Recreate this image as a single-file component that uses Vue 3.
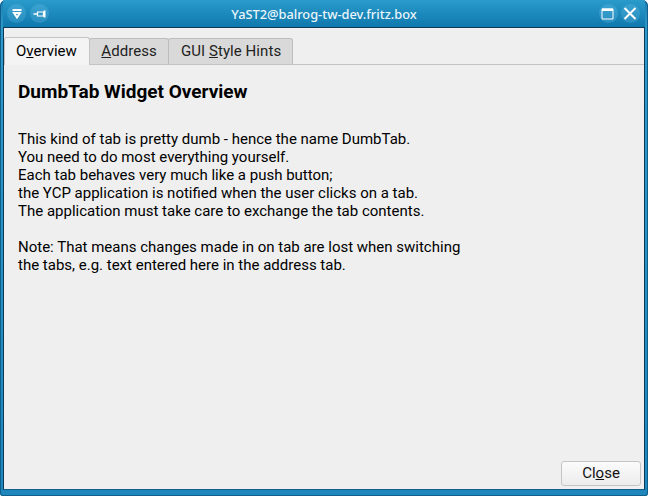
<template>
  <div class="window">
    <div class="titlebar">
      <div class="title-btns">
        <span class="round-btn">
          <svg width="14" height="14" viewBox="0 0 14 14">
            <path d="M2.500 2h9v2h-9z" fill="#fff" />
            <path d="M4 6h6L7 10.500z" fill="none" stroke="#fff" stroke-width="2" />
          </svg>
        </span>
        <span class="round-btn">
          <svg width="14" height="14" viewBox="0 0 14 14">
            <path d="M0.500 7h4" fill="none" stroke="#fff" stroke-width="1.500" />
            <path d="M4.500 5h6v4h-6z" fill="none" stroke="#fff" stroke-width="1.200" />
            <path d="M10.500 3.500h2v7h-2z" fill="#fff" />
          </svg>
        </span>
      </div>
      <div class="title">YaST2@balrog-tw-dev.fritz.box</div>
      <div class="title-btns">
        <span class="round-btn">
          <svg width="14" height="14" viewBox="0 0 14 14">
            <path d="M1 2h11v10H1z" fill="none" stroke="#fff" stroke-width="1" />
            <path d="M1 1.500h11V4H1z" fill="#fff" />
          </svg>
        </span>
        <span class="round-btn">
          <svg width="14" height="14" viewBox="0 0 14 14">
            <path d="M1.500 1l11 11M12.500 1l-11 11" fill="none" stroke="#fff" stroke-width="2" />
          </svg>
        </span>
      </div>
    </div>

    <div class="content">
      <div class="tabs">
        <button v-for="tab in tabs" :key="tab.before" class="tab" :class="{ active: tab.active }">
          {{ tab.before }}<u>{{ tab.key }}</u>{{ tab.after }}
        </button>
      </div>

      <div class="page">
        <h1>DumbTab Widget Overview</h1>
        <p>
          This kind of tab is pretty dumb - hence the name DumbTab.<br />
          You need to do most everything yourself.<br />
          Each tab behaves very much like a push button;<br />
          the YCP application is notified when the user clicks on a tab.<br />
          The application must take care to exchange the tab contents.
        </p>
        <p>
          Note: That means changes made in on tab are lost when switching<br />
          the tabs, e.g. text entered here in the address tab.
        </p>
      </div>

      <div class="footer">
        <button class="close-btn">Cl<u>o</u>se</button>
      </div>
    </div>
  </div>
</template>

<script setup>
const tabs = [
  { before: 'O', key: 'v', after: 'erview', active: true },
  { before: '', key: 'A', after: 'ddress', active: false },
  { before: 'GUI ', key: 'S', after: 'tyle Hints', active: false }
]
</script>

<style>
html,
body {
  margin: 0;
  background: #fff;
}
</style>

<style scoped>
.window {
  width: 648px;
  height: 496px;
  box-sizing: border-box;
  display: flex;
  flex-direction: column;
  padding: 0 3px 6px 3px;
  border-radius: 6px 6px 3px 3px;
  background: linear-gradient(#1d7fb5, #2d9ac9 28px, #1f86bb);
  box-shadow: inset 0 0 0 1px #0f5f8d;
  font-family: Roboto, "Liberation Sans", sans-serif;
  font-size: 15px;
  color: #000;
}

.titlebar {
  height: 27px;
  flex: none;
  display: flex;
  align-items: center;
  justify-content: space-between;
  padding: 0 5px 0 4px;
  color: #fff;
  background: linear-gradient(#2a9bcb, #0f78ad);
}

.title {
  font-family: "Noto Sans", "Open Sans", sans-serif;
  font-size: 12.800px;
  font-weight: 500;
  color: #eaf5fb;
}

.title-btns {
  display: flex;
  gap: 3px;
}

.title-btns:first-child {
  gap: 4px;
}

.round-btn {
  width: 19px;
  height: 19px;
  border-radius: 50%;
  background: linear-gradient(#3aa2d0, #2a8fc0);
  display: flex;
  align-items: center;
  justify-content: center;
}

.content {
  flex: 1;
  display: flex;
  flex-direction: column;
  background: #efefef;
  border: 1px solid #0b3a58;
  border-bottom-color: #0f5f8d;
  min-height: 0;
}

.tabs {
  display: flex;
  padding: 8px 0 0 0;
  height: 28px;
  border-bottom: 1px solid #c3c3c3;
  align-items: flex-end;
}

.tab {
  height: 26px;
  padding: 0 11.500px 2px;
  margin: 0;
  border: 1px solid #bdbdbd;
  border-bottom: none;
  border-radius: 3px 3px 0 0;
  background: #d9d9d9;
  font: inherit;
  letter-spacing: 0.070px;
  color: #222;
  margin-left: -1px;
}

.tab:first-child {
  margin-left: 0;
  padding-left: 11px;
  padding-right: 12px;
}

.tab:last-child {
  padding-right: 10.500px;
}

.tab.active {
  height: 28px;
  background: #f4f4f4;
  color: #000;
  margin-bottom: -1px;
  z-index: 1;
  border-color: #c3c3c3;
  letter-spacing: 0;
}

.page {
  flex: 1;
  padding: 0 14px;
  line-height: 18px;
}

h1 {
  margin: 16px 0 27px;
  font-size: 19px;
  font-weight: 700;
  line-height: 22px;
}

p {
  margin: 0 0 18px;
}

.footer {
  display: flex;
  justify-content: flex-end;
  padding: 0 3px 3px 0;
}

.close-btn {
  width: 80px;
  height: 25px;
  padding: 0 0 2px;
  border: 1px solid #c4c4c4;
  border-radius: 3px;
  background: linear-gradient(#fbfbfb, #ececec);
  font: inherit;
  color: #111;
}
</style>
